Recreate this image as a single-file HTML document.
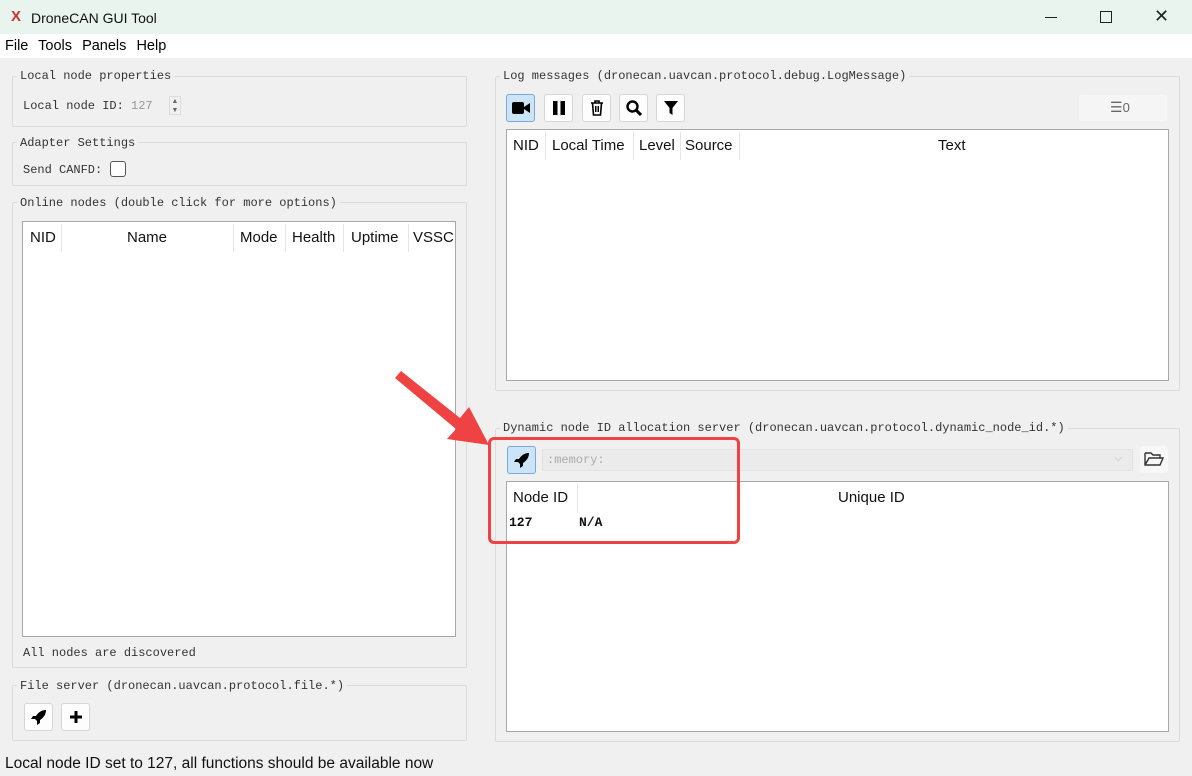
<!DOCTYPE html>
<html><head><meta charset="utf-8"><style>
*{box-sizing:border-box;margin:0;padding:0}
body{width:1192px;height:776px;overflow:hidden;background:#f0f0f0;position:relative;font-family:"Liberation Sans",sans-serif}
.a{position:absolute}
.grp{position:absolute;border:1px solid #dcdcdc;border-radius:2px}
.gt{position:absolute;font-family:"Liberation Mono",monospace;font-size:12px;color:#333;background:#f0f0f0;padding:0 3px;white-space:nowrap}
.tbl{position:absolute;background:#fff;border:1px solid #a8a8a8}
.th{position:absolute;font-size:15px;color:#111;top:7px;white-space:nowrap}
.sep{position:absolute;top:2px;width:1px;height:28px;background:#e6e6e6}
.btn{position:absolute;width:29px;height:28px;background:#fdfdfd;border:1px solid #d6d6d6;border-radius:3px;display:flex;align-items:center;justify-content:center}
.btn.on{background:#cce4f7;border-color:#7aa9d6}
</style></head><body>
<div class="a" style="left:0;top:0;width:1192px;height:34px;background:#e9f4ef"></div>
<div class="a" style="left:11px;top:9px;font-size:15px;color:#c0392b;font-weight:bold;line-height:16px">X</div>
<div class="a" style="left:31px;top:10px;font-size:14px;color:#111">DroneCAN GUI Tool</div>
<div class="a" style="left:1045px;top:17px;width:12px;height:1px;background:#222"></div>
<div class="a" style="left:1100px;top:11px;width:12px;height:12px;border:1.3px solid #222"></div>
<div class="a" style="left:1154px;top:6px;font-size:18px;color:#222">✕</div>
<div class="a" style="left:0;top:34px;width:1192px;height:24px;background:#fff"></div>
<div class="a" style="left:5px;top:38px;font-size:14.5px;color:#000;word-spacing:1px">File&nbsp; Tools&nbsp; Panels&nbsp; Help</div>

<div class="grp" style="left:12px;top:76px;width:455px;height:51px"></div>
<div class="gt" style="left:17px;top:69px">Local node properties</div>
<div class="a" style="left:23px;top:99px;font-family:'Liberation Mono',monospace;font-size:12px;color:#333">Local node ID: <span style="color:#999">127</span></div>
<div class="a" style="left:169px;top:96px;width:12px;height:19px;border:1px solid #ddd;font-size:7px;color:#666;text-align:center;line-height:9px">▲<br>▼</div>

<div class="grp" style="left:12px;top:142px;width:455px;height:44px"></div>
<div class="gt" style="left:17px;top:136px">Adapter Settings</div>
<div class="a" style="left:23px;top:163px;font-family:'Liberation Mono',monospace;font-size:12px;color:#333">Send CANFD:</div>
<div class="a" style="left:110px;top:161px;width:16px;height:16px;border:1px solid #555;border-radius:3px;background:#fff"></div>

<div class="grp" style="left:12px;top:202px;width:455px;height:466px"></div>
<div class="gt" style="left:17px;top:196px">Online nodes (double click for more options)</div>
<div class="tbl" style="left:22px;top:221px;width:434px;height:416px">
<div class="th" style="left:7px">NID</div><div class="sep" style="left:38px"></div>
<div class="th" style="left:104px">Name</div><div class="sep" style="left:210px"></div>
<div class="th" style="left:217px">Mode</div><div class="sep" style="left:262px"></div>
<div class="th" style="left:269px">Health</div><div class="sep" style="left:320px"></div>
<div class="th" style="left:328px">Uptime</div><div class="sep" style="left:385px"></div>
<div class="th" style="left:390px">VSSC</div>
</div>
<div class="a" style="left:23px;top:646px;font-family:'Liberation Mono',monospace;font-size:12px;color:#333">All nodes are discovered</div>

<div class="grp" style="left:12px;top:685px;width:455px;height:56px"></div>
<div class="gt" style="left:17px;top:679px">File server (dronecan.uavcan.protocol.file.*)</div>
<div class="btn" style="left:24px;top:703px"><svg width="16" height="16" viewBox="0 0 16 16"><path d="M15 1C10 1 7 4 5 7L2 7 0 10 4 10 6 12 6 16 9 14 9 11C12 9 15 6 15 1Z" fill="#000"/></svg></div>
<div class="btn" style="left:61px;top:703px"><svg width="16" height="16" viewBox="0 0 16 16"><path d="M8 2V14M2 8H14" stroke="#000" stroke-width="3"/></svg></div>

<div class="grp" style="left:495px;top:76px;width:685px;height:315px"></div>
<div class="gt" style="left:500px;top:69px">Log messages (dronecan.uavcan.protocol.debug.LogMessage)</div>
<div class="btn on" style="left:506px;top:94px"><svg width="18" height="14" viewBox="0 0 18 14"><rect x="0" y="1" width="12" height="12" rx="2" fill="#000"/><path d="M12 6L18 2V12L12 8Z" fill="#000"/></svg></div>
<div class="btn" style="left:544px;top:94px"><svg width="14" height="16"><rect x="1" y="1" width="4.5" height="14" fill="#000"/><rect x="8.5" y="1" width="4.5" height="14" fill="#000"/></svg></div>
<div class="btn" style="left:582px;top:94px"><svg width="14" height="16" viewBox="0 0 14 16"><path d="M1 3H13M5 3V1H9V3M2.5 3L3.5 15H10.5L11.5 3" stroke="#000" stroke-width="1.6" fill="none"/><path d="M5.5 6V12M7 6V12M8.5 6V12" stroke="#000" stroke-width="1"/></svg></div>
<div class="btn" style="left:619px;top:94px"><svg width="16" height="16" viewBox="0 0 16 16"><circle cx="6.5" cy="6.5" r="5" stroke="#000" stroke-width="2.4" fill="none"/><path d="M10 10L15 15" stroke="#000" stroke-width="3"/></svg></div>
<div class="btn" style="left:656px;top:94px"><svg width="14" height="16" viewBox="0 0 14 16"><path d="M0 1H14L8.5 8V15L5.5 13V8Z" fill="#000"/></svg></div>
<div class="a" style="left:1079px;top:95px;width:88px;height:26px;background:#f5f5f5;border-radius:3px"></div>
<div class="a" style="left:1110px;top:99px;font-size:14px;color:#666">☰<span style="font-size:13px">0</span></div>
<div class="tbl" style="left:506px;top:129px;width:663px;height:252px">
<div class="th" style="left:6px">NID</div><div class="sep" style="left:38px"></div>
<div class="th" style="left:45px">Local Time</div><div class="sep" style="left:126px"></div>
<div class="th" style="left:132px">Level</div><div class="sep" style="left:173px"></div>
<div class="th" style="left:178px">Source</div><div class="sep" style="left:232px"></div>
<div class="th" style="left:431px">Text</div>
</div>

<div class="grp" style="left:495px;top:428px;width:685px;height:314px"></div>
<div class="gt" style="left:500px;top:421px">Dynamic node ID allocation server (dronecan.uavcan.protocol.dynamic_node_id.*)</div>
<div class="btn on" style="left:507px;top:446px"><svg width="16" height="16" viewBox="0 0 16 16"><path d="M15 1C10 1 7 4 5 7L2 7 0 10 4 10 6 12 6 16 9 14 9 11C12 9 15 6 15 1Z" fill="#000"/></svg></div>
<div class="a" style="left:542px;top:449px;width:591px;height:22px;background:#ebebeb;border:1px solid #e2e2e2"></div>
<div class="a" style="left:547px;top:453px;font-family:'Liberation Mono',monospace;font-size:12px;color:#aaa">:memory:</div>
<div class="a" style="left:1114px;top:452px;font-size:11px;color:#bbb">⌵</div>
<div class="a" style="left:1140px;top:446px;width:28px;height:27px;background:#f7f7f7;border-radius:3px"></div>
<svg class="a" style="left:1144px;top:451px" width="20" height="16" viewBox="0 0 20 16"><path d="M1 2H7L9 4H16V7M1 2V14H16L19 7H5L1 14" stroke="#333" stroke-width="1.4" fill="none"/></svg>
<div class="tbl" style="left:506px;top:481px;width:663px;height:251px">
<div class="th" style="left:6px">Node ID</div><div class="sep" style="left:70px"></div>
<div class="th" style="left:331px">Unique ID</div>
<div class="a" style="left:2px;top:33px;font-size:13px;font-weight:bold;color:#111;font-family:'Liberation Mono',monospace">127</div>
<div class="a" style="left:72px;top:33px;font-size:13px;font-weight:bold;color:#111;font-family:'Liberation Mono',monospace">N/A</div>
</div>

<div class="a" style="left:488px;top:437px;width:252px;height:107px;border:3px solid #ef4343;border-radius:6px"></div>
<svg class="a" style="left:390px;top:365px" width="110" height="90" viewBox="0 0 110 90"><path d="M5 13L11 6L70 53L79 42L99 80L57 74L66 64Z" fill="#ef4343"/></svg>

<div class="a" style="left:5px;top:755px;font-size:15.5px;color:#111">Local node ID set to 127, all functions should be available now</div>
</body></html>
